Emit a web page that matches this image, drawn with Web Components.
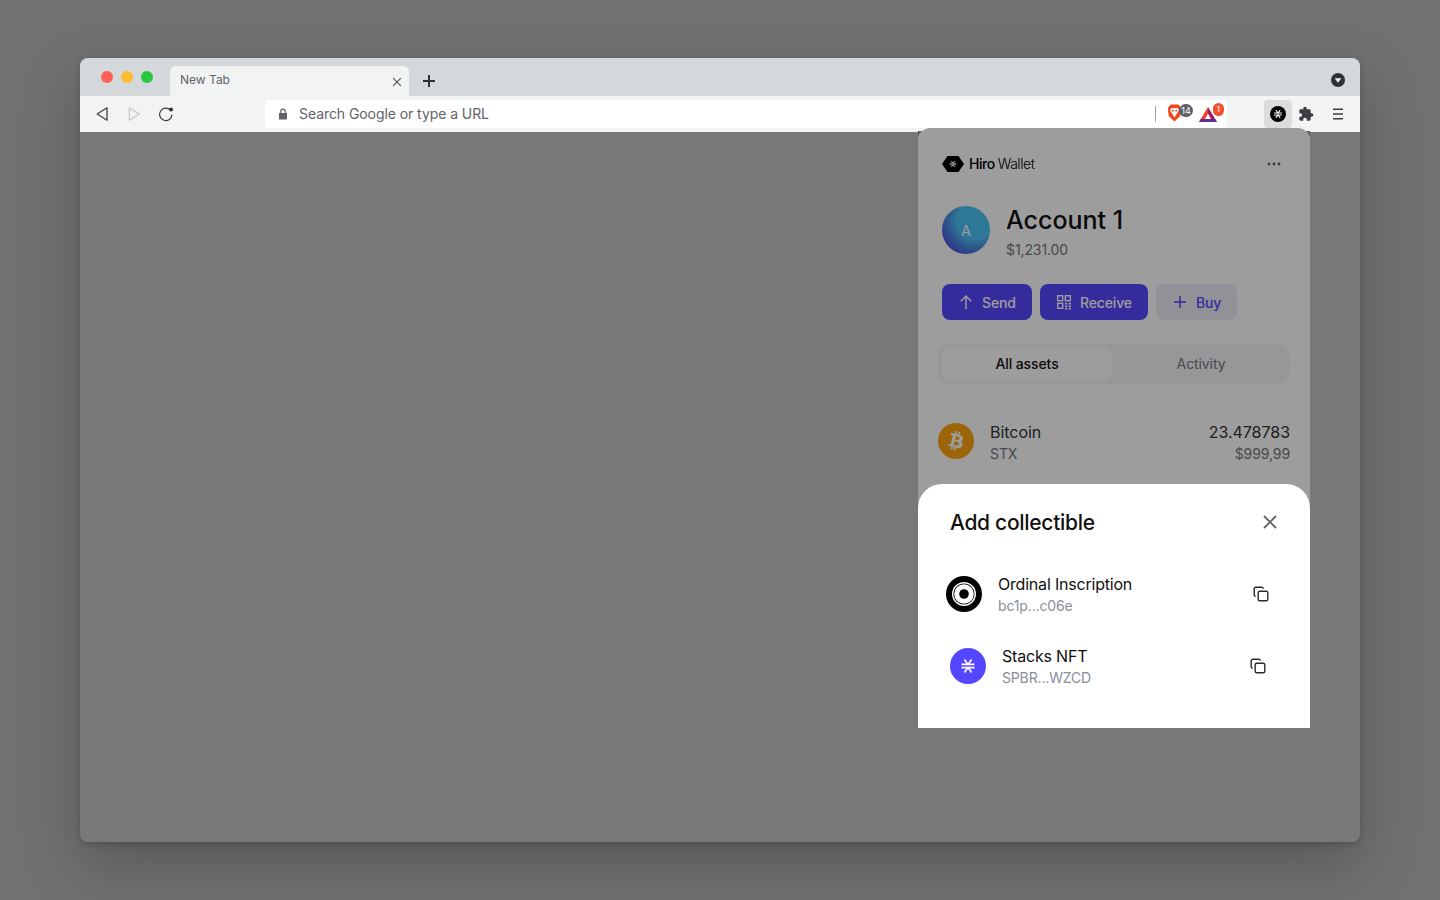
<!DOCTYPE html>
<html lang="en">
  <head>
    <meta charset="utf-8" />
    <title>Hiro Wallet</title>
    <style>
      html, body { margin: 0; height: 100%; }
      body { background: #717171; font-family: Inter, "Liberation Sans", sans-serif; overflow: hidden; }
    </style>
  </head>
  <body>
    <browser-window>
      <wallet-popup slot="popup"></wallet-popup>
    </browser-window>

    <script>
      // small helper so every element below stays a template + a class
      function shadow(el, html) {
        el.attachShadow({ mode: 'open' }).innerHTML = html;
      }

      const COPY_ICON = `<svg width="18" height="18" viewBox="0 0 18 18" fill="none" stroke="#2b2b30" stroke-width="1.4">
        <rect x="6.2" y="6.2" width="9.6" height="9.6" rx="1.6"/>
        <path d="M3.7 11.3 A1.5 1.5 0 0 1 2.2 9.8 V3.7 A1.5 1.5 0 0 1 3.7 2.2 H9.8 A1.5 1.5 0 0 1 11.3 3.7"/>
      </svg>`;

      function stacksGlyph(width) {
        return `<path d="M5.5 10.4H18.5M5.5 13.6H18.5M8.4 5.6L12 10.4L15.6 5.6M8.4 18.4L12 13.6L15.6 18.4" fill="none" stroke="currentColor" stroke-width="${width}"/>`;
      }

      class BrowserWindow extends HTMLElement {
        constructor() {
          super();
          shadow(this, `
            <style>
              :host { display: block; position: absolute; left: 80px; top: 58px; width: 1280px; height: 784px;
                border-radius: 8px; box-shadow: 0 24px 60px rgba(0,0,0,.22), 0 2px 6px rgba(0,0,0,.18); }
              .frame { display: flex; flex-direction: column; height: 100%; border-radius: 8px; overflow: hidden; background: #787878; }
              .popup { position: absolute; left: 838px; top: 70px; }
              .tick { position: absolute; left: 838px; top: 73px; width: 392px; height: 5px; background: #5c5c5c; }
            </style>
            <div class="frame">
              <tab-strip></tab-strip>
              <browser-toolbar></browser-toolbar>
            </div>
            <div class="tick"></div>
            <div class="popup"><slot name="popup"></slot></div>
          `);
        }
      }

      class TabStrip extends HTMLElement {
        constructor() {
          super();
          shadow(this, `
            <style>
              :host { display: flex; height: 38px; background: #d5d8db; align-items: flex-end; padding: 0 14px 0 21px; box-sizing: border-box; }
              .lights { display: flex; gap: 8px; align-self: flex-start; margin-top: 13px; width: 69px; }
              .lights i { width: 12px; height: 12px; border-radius: 50%; }
              .tab { width: 239px; height: 30px; box-sizing: border-box; background: #f2f3f3; border-radius: 6px 6px 0 0;
                display: flex; align-items: center; justify-content: space-between; padding: 0 7px 4px 10px;
                font-size: 12px; color: #5f6368; }
              .tab svg { margin-top: 5px; }
              .plus { margin: 0 0 7px 12px; display: block; }
              .menu { margin: 0 0 8px auto; display: block; }
            </style>
            <div class="lights">
              <i style="background:#ff5f57"></i><i style="background:#febc2e"></i><i style="background:#28c840"></i>
            </div>
            <div class="tab">New Tab
              <svg width="10" height="10" viewBox="0 0 10 10" stroke="#4a4d51" stroke-width="1.1"><path d="M1.2 1.2L8.8 8.8M8.8 1.2L1.2 8.8"/></svg>
            </div>
            <svg class="plus" width="16" height="16" viewBox="0 0 16 16" stroke="#2f3134" stroke-width="2"><path d="M8 2V14M2 8H14"/></svg>
            <svg class="menu" width="16" height="16" viewBox="0 0 16 16"><circle cx="8" cy="8" r="7" fill="#2f3134"/><path d="M4.6 6.2H11.4L8 10.8Z" fill="#eee"/></svg>
          `);
        }
      }

      class BrowserToolbar extends HTMLElement {
        constructor() {
          super();
          shadow(this, `
            <style>
              :host { display: flex; align-items: center; height: 36px; background: #f2f3f3; box-sizing: border-box; padding: 0 14px; }
              .nav { display: flex; gap: 16px; width: 171px; }
              .nav svg { display: block; }
              .omni { width: 962px; height: 28px; box-sizing: border-box; background: #fff; border-radius: 4px; display: flex; align-items: center;
                padding-left: 13px; font-size: 14px; color: #5f6368; letter-spacing: -.07px; }
              .omni .label { padding-bottom: 2px; }
              .lock { margin-right: 11px; }
              .sep { width: 1px; height: 16px; background: #9a9da0; margin-left: auto; margin-right: 11px; }
              .ext { position: relative; display: flex; align-items: center; }
              .ext svg { display: block; }
              .badge { position: absolute; border-radius: 7px; color: #fff; font-size: 9px; line-height: 13px; height: 13px; text-align: center; letter-spacing: 0; }
              .tools { display: flex; align-items: center; margin-left: 37px; }
              .active { width: 28px; height: 28px; border-radius: 4px; background: #dcdcdc; display: flex; align-items: center; justify-content: center; }
              .puzzle { margin-left: 6px; }
              .burger { margin-left: 16px; }
            </style>
            <div class="nav">
              <svg width="16" height="16" viewBox="0 0 16 16" fill="none" stroke="#3c3f42" stroke-width="1.3" stroke-linejoin="round"><path d="M13 1.8V14.2L3.2 8Z"/></svg>
              <svg width="16" height="16" viewBox="0 0 16 16" fill="none" stroke="#c5c7c9" stroke-width="1.3" stroke-linejoin="round"><path d="M3.4 1.8V14.2L13.2 8Z"/></svg>
              <svg width="16" height="16" viewBox="0 0 16 16" fill="none"><path d="M12.4 4.2A6.2 6.2 0 1 0 14 8.6" stroke="#3c3f42" stroke-width="1.2"/><circle cx="13" cy="3.6" r="2" fill="#2f3134"/></svg>
            </div>
            <div class="omni">
              <svg class="lock" width="10" height="12" viewBox="0 0 10 12" fill="#5f6368"><path d="M1 5H9V11.4H1Z"/><path d="M2.8 5V3.4A2.2 2.2 0 0 1 7.2 3.4V5" fill="none" stroke="#5f6368" stroke-width="1.2"/></svg>
              <span class="label">Search Google or type a URL</span>
              <span class="sep"></span>
              <span class="ext" style="width:32px">
                <svg width="15" height="18" viewBox="0 0 18 20" preserveAspectRatio="none" style="margin-top:-2px"><path d="M4.4 .6H13.6L17 4.4L16 13.4L9 19.4L2 13.4L1 4.4Z" fill="#f1491f"/><path d="M4.6 4.6H13.4L14 7.6L11.4 11.4L9 15L6.6 11.4L4 7.6Z" fill="#fff"/><circle cx="7" cy="7.6" r="1.1" fill="#f1491f"/><circle cx="11" cy="7.6" r="1.1" fill="#f1491f"/></svg>
                <span class="badge" style="left:12px;top:-2px;width:14px;background:#5e626b">14</span>
              </span>
              <span class="ext" style="width:28px">
                <svg width="18" height="15" viewBox="0 0 18 15">
                  <path d="M9 0L0 15H4.4L9 6.6Z" fill="#e8402b"/>
                  <path d="M9 0L18 15H13.6L9 6.6Z" fill="#a01f63"/>
                  <path d="M0 15H18L16.2 12H1.8Z" fill="#662d91"/>
                </svg>
                <span class="badge" style="left:14px;top:-4px;width:11px;background:#f1522d;font-size:8px">1</span>
              </span>
            </div>
            <div class="tools">
              <div class="active">
                <svg width="16" height="16" viewBox="0 0 24 24" style="color:#fff"><circle cx="12" cy="12" r="12" fill="#000"/><g transform="translate(1.2 1.2) scale(.9)">${stacksGlyph(1.8)}</g></svg>
              </div>
              <svg class="puzzle" width="16" height="16" viewBox="0 0 24 24" fill="#3c3f42"><path d="M20.5 11H19V7c0-1.1-.9-2-2-2h-4V3.5C13 2.12 11.88 1 10.5 1S8 2.12 8 3.5V5H4c-1.1 0-1.99.9-1.99 2v3.8H3.5c1.49 0 2.7 1.21 2.7 2.7s-1.21 2.7-2.7 2.7H2V20c0 1.1.9 2 2 2h3.8v-1.5c0-1.49 1.21-2.7 2.7-2.7 1.49 0 2.7 1.21 2.7 2.7V22H17c1.1 0 2-.9 2-2v-4h1.5c1.38 0 2.5-1.12 2.5-2.5S21.88 11 20.5 11z"/></svg>
              <svg class="burger" width="16" height="16" viewBox="0 0 16 16" stroke="#3c3f42" stroke-width="1.4"><path d="M3 3.2H13M3 8H13M3 12.8H13"/></svg>
            </div>
          `);
        }
      }

      class ActionButton extends HTMLElement {
        constructor() {
          super();
          shadow(this, `
            <style>
              :host { display: inline-flex; align-items: center; gap: 8px; height: 36px; box-sizing: border-box; padding: 0 16px;
                border-radius: 8px; font-size: 14px; font-weight: 500; letter-spacing: -.12px; background: #5546ff; color: #fff; }
              :host([kind="light"]) { background: #ebebf5; color: #5546ff; }
              svg { display: block; }
            </style>
            <slot name="icon"></slot><slot></slot>
          `);
        }
      }

      class AssetRow extends HTMLElement {
        constructor() {
          super();
          shadow(this, `
            <style>
              :host { display: flex; align-items: flex-start; gap: 16px; }
              .icon { width: 36px; height: 36px; margin-top: 1px; }
              .col { display: flex; flex-direction: column; gap: 2px; }
              .end { margin-left: auto; text-align: right; }
              .main { font-size: 16px; line-height: 20px; color: #333; letter-spacing: -.03px; }
              .sub { font-size: 14px; line-height: 20px; color: #74777d; letter-spacing: -.1px; }
            </style>
            <div class="icon"><slot name="icon"></slot></div>
            <div class="col">
              <div class="main"><slot name="name"></slot></div>
              <div class="sub"><slot name="ticker"></slot></div>
            </div>
            <div class="col end">
              <div class="main"><slot name="amount"></slot></div>
              <div class="sub"><slot name="fiat"></slot></div>
            </div>
          `);
        }
      }

      class CollectibleRow extends HTMLElement {
        constructor() {
          super();
          shadow(this, `
            <style>
              :host { display: flex; align-items: center; gap: 16px; height: 36px; }
              .icon { width: 36px; height: 36px; }
              .col { display: flex; flex-direction: column; gap: 2px; margin-top: 2px; }
              .main { font-size: 16px; line-height: 20px; color: #12100f; letter-spacing: -.2px; }
              .sub { font-size: 14px; line-height: 20px; color: #8a8e99; letter-spacing: -.15px; }
              .copy { margin-left: auto; display: block; height: 18px; }
            </style>
            <div class="icon"><slot name="icon"></slot></div>
            <div class="col">
              <div class="main"><slot name="title"></slot></div>
              <div class="sub"><slot name="address"></slot></div>
            </div>
            <div class="copy">${COPY_ICON}</div>
          `);
        }
      }

      class CollectibleSheet extends HTMLElement {
        constructor() {
          super();
          shadow(this, `
            <style>
              :host { display: block; position: absolute; left: 0; right: 0; bottom: 0; height: 244px; box-sizing: border-box;
                background: #fff; border-radius: 24px 24px 0 0; padding: 24px 32px 0 32px; }
              .head { display: flex; align-items: center; justify-content: space-between; height: 28px; margin-bottom: 40px; }
              h2 { margin: 2px 0 0; font-size: 21px; line-height: 28px; font-weight: 500; color: #12100f; letter-spacing: -.3px; }
              svg { display: block; }
              .rows { display: flex; flex-direction: column; gap: 36px; }
              .first { margin: 0 8px 0 -4px; }
              .second { margin-right: 11px; }
            </style>
            <div class="head">
              <h2>Add collectible</h2>
              <svg width="16" height="16" viewBox="0 0 16 16" stroke="#5f636b" stroke-width="1.8"><path d="M2 2L14 14M14 2L2 14"/></svg>
            </div>
            <div class="rows">
              <collectible-row class="first">
                <svg slot="icon" width="36" height="36" viewBox="0 0 36 36"><circle cx="18" cy="18" r="18" fill="#000"/><circle cx="18" cy="18" r="12" fill="#fff"/><circle cx="18" cy="18" r="10.6" fill="#000"/><circle cx="18" cy="18" r="9.8" fill="#fff"/><circle cx="18" cy="18" r="4.8" fill="#000"/></svg>
                <span slot="title">Ordinal Inscription</span>
                <span slot="address">bc1p...c06e</span>
              </collectible-row>
              <collectible-row class="second">
                <svg slot="icon" width="36" height="36" viewBox="0 0 36 36" style="color:#fff"><circle cx="18" cy="18" r="18" fill="#5546ff"/><g transform="translate(6 6)">${stacksGlyph(1.6)}</g></svg>
                <span slot="title">Stacks NFT</span>
                <span slot="address">SPBR...WZCD</span>
              </collectible-row>
            </div>
          `);
        }
      }

      class WalletPopup extends HTMLElement {
        constructor() {
          super();
          shadow(this, `
            <style>
              :host { display: block; position: relative; width: 392px; height: 600px; background: #fff; border-radius: 12px 12px 0 0; overflow: hidden; }
              .body { display: flex; flex-direction: column; padding: 28px 20px 0 24px; }
              .top { display: flex; align-items: center; justify-content: space-between; height: 16px; padding-right: 8px; }
              .logo { display: flex; align-items: center; gap: 5px; font-size: 14px; letter-spacing: -.45px; color: #000; }
              .logo b { font-weight: 500; padding-bottom: 2px; }
              .logo span { font-weight: 300; margin-left: -2px; padding-bottom: 2px; }
              .account { display: flex; gap: 16px; margin-top: 34px; height: 48px; }
              .avatar { width: 48px; height: 48px; border-radius: 50%; color: #fff; display: flex; align-items: center; justify-content: center;
                font-size: 14px; background: radial-gradient(circle at 70% 30%, #4cc4f5 0 38%, #4a7cdc 64%, #5a30e6 92%); }
              .who { display: flex; flex-direction: column; gap: 4px; margin-top: -2px; }
              .name { font-size: 25px; line-height: 32px; font-weight: 500; color: #12100f; }
              .balance { font-size: 14px; line-height: 20px; color: #74777d; letter-spacing: -.1px; }
              .actions { display: flex; gap: 8px; margin-top: 30px; }
              .tabs { display: flex; margin: 24px 0 0 -4px; height: 40px; padding: 4px 0 4px 4px; box-sizing: border-box; border-radius: 12px; background: #f5f5f8; }
              .tabs div { flex: 1; display: flex; align-items: center; justify-content: center; font-size: 14px; color: #74777d; letter-spacing: -.1px; padding-bottom: 1px; }
              .tabs .on { flex: 0 0 170px; background: #fff; border-radius: 8px; color: #12100f; font-weight: 500; }
              asset-row { margin: 38px 0 0 -4px; }
              .dim { position: absolute; inset: 0; background: rgba(0,0,0,.385); }
            </style>
            <div class="body">
              <div class="top">
                <div class="logo">
                  <svg width="22" height="16" viewBox="0 0 22 16" style="color:#fff"><path d="M5.5 0H16.5L22 8L16.5 16H5.5L0 8Z" fill="#000"/><g transform="translate(5 2) scale(.5)">${stacksGlyph(2)}</g></svg>
                  <b>Hiro</b><span>Wallet</span>
                </div>
                <svg width="16" height="4" viewBox="0 0 16 4" fill="#5f636b"><circle cx="3" cy="2" r="1.4"/><circle cx="8" cy="2" r="1.4"/><circle cx="13" cy="2" r="1.4"/></svg>
              </div>
              <div class="account">
                <div class="avatar">A</div>
                <div class="who">
                  <div class="name">Account 1</div>
                  <div class="balance">$1,231.00</div>
                </div>
              </div>
              <div class="actions">
                <action-button>
                  <svg slot="icon" width="16" height="16" viewBox="0 0 16 16" fill="none" stroke="#fff" stroke-width="1.5"><path d="M8 15V2M2.8 7.2L8 2L13.2 7.2"/></svg>
                  Send
                </action-button>
                <action-button>
                  <svg slot="icon" width="16" height="16" viewBox="0 0 16 16" fill="none" stroke="#fff" stroke-width="1.4"><rect x="1.7" y="1.7" width="5" height="5"/><rect x="9.3" y="1.7" width="5" height="5"/><rect x="1.7" y="9.3" width="5" height="5"/><path d="M9 9.6H11.2M12.6 9.6H15M9 12.2H11.2M12.6 12.2H15M9 14.6H11.2M12.6 14.6H15" stroke-width="1.6"/></svg>
                  Receive
                </action-button>
                <action-button kind="light">
                  <svg slot="icon" width="16" height="16" viewBox="0 0 16 16" fill="none" stroke="#5546ff" stroke-width="1.5"><path d="M8 2V14M2 8H14"/></svg>
                  Buy
                </action-button>
              </div>
              <div class="tabs"><div class="on">All assets</div><div>Activity</div></div>
              <asset-row>
                <svg slot="icon" width="36" height="36" viewBox="0 0 36 36"><circle cx="18" cy="18" r="18" fill="#ffa50f"/><g transform="translate(2.4 2.4) scale(1.3)"><path fill="#fff" d="M17.291 10.29c.24-1.59-.974-2.45-2.64-3.03l.54-2.153-1.315-.33-.525 2.107c-.345-.087-.705-.167-1.064-.25l.526-2.127-1.32-.33-.54 2.165c-.285-.067-.565-.132-.84-.2l-1.815-.45-.35 1.407s.975.225.955.236c.535.136.63.486.615.766l-1.477 5.92c-.075.166-.24.406-.614.314.015.02-.96-.24-.96-.24l-.66 1.51 1.71.426.93.242-.54 2.19 1.32.327.54-2.17c.36.1.705.19 1.05.273l-.51 2.154 1.32.33.545-2.19c2.24.427 3.93.257 4.64-1.774.57-1.637-.03-2.58-1.217-3.196.854-.193 1.5-.76 1.68-1.93h.01zm-3.01 4.22c-.404 1.64-3.157.75-4.05.53l.72-2.9c.896.23 3.757.67 3.33 2.37zm.41-4.24c-.37 1.49-2.662.735-3.405.55l.654-2.64c.744.18 3.137.524 2.75 2.084v.006z"/></g></svg>
                <span slot="name">Bitcoin</span>
                <span slot="ticker">STX</span>
                <span slot="amount">23.478783</span>
                <span slot="fiat">$999,99</span>
              </asset-row>
            </div>
            <div class="dim"></div>
            <collectible-sheet></collectible-sheet>
          `);
        }
      }

      customElements.define('browser-window', BrowserWindow);
      customElements.define('tab-strip', TabStrip);
      customElements.define('browser-toolbar', BrowserToolbar);
      customElements.define('action-button', ActionButton);
      customElements.define('asset-row', AssetRow);
      customElements.define('collectible-row', CollectibleRow);
      customElements.define('collectible-sheet', CollectibleSheet);
      customElements.define('wallet-popup', WalletPopup);
    </script>
  </body>
</html>
